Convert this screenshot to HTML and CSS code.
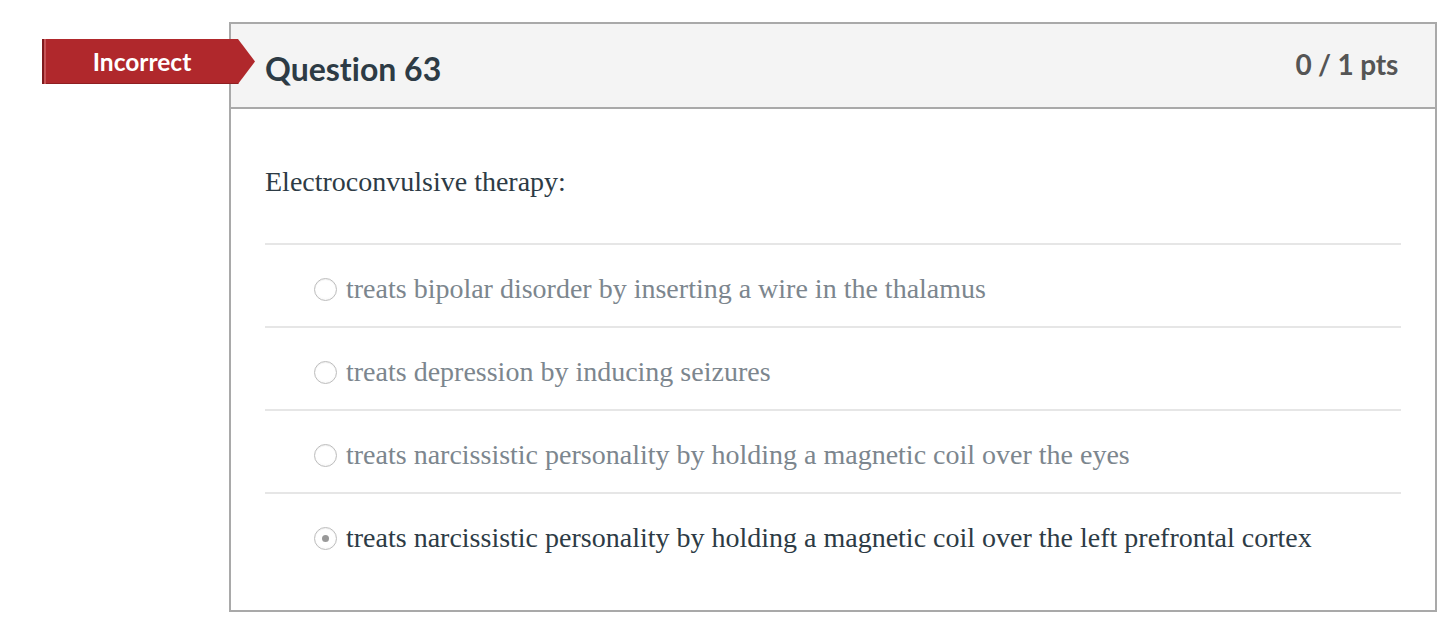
FILE: index.html
```html
<!DOCTYPE html>
<html>
<head>
<meta charset="utf-8">
<link rel="stylesheet" href="styles.css">
</head>
<body>
<div class="question">
  <div class="badge">Incorrect</div>
  <div class="q-header">
    <h2 class="q-title">Question 63</h2>
    <div class="q-points">0 / 1 pts</div>
  </div>
  <div class="q-body">
    <div class="q-text">Electroconvulsive therapy:</div>
    <div class="answers">
      <div class="answer"><span class="radio"></span><span class="label">treats bipolar disorder by inserting a wire in the thalamus</span></div>
      <div class="answer"><span class="radio"></span><span class="label">treats depression by inducing seizures</span></div>
      <div class="answer"><span class="radio"></span><span class="label">treats narcissistic personality by holding a magnetic coil over the eyes</span></div>
      <div class="answer selected"><span class="radio"></span><span class="label">treats narcissistic personality by holding a magnetic coil over the left prefrontal cortex</span></div>
    </div>
  </div>
</div>
</body>
</html>
```

FILE: styles.css
```css
html, body {
  margin: 0;
  padding: 0;
  background: #ffffff;
}
body {
  padding-top: 22px;
  padding-left: 229px;
}
.question {
  position: relative;
  box-sizing: border-box;
  width: 1208px;
  height: 590px;
  border: 2px solid #a9a9a9;
}
.badge {
  position: absolute;
  left: -189px;
  top: 15px;
  box-sizing: border-box;
  width: 213px;
  height: 45px;
  padding-right: 15px;
  background: #b0282c;
  border-left: 2px solid #7e1a1d;
  box-shadow: inset 2px 0 0 #c65457, inset 0 -1px 0 #8f1f22;
  clip-path: polygon(0 0, 196px 0, 213px 50%, 196px 100%, 0 100%);
  color: #ffffff;
  font-family: Lato, "Liberation Sans", sans-serif;
  font-weight: 700;
  font-size: 24.5px;
  font-variant-ligatures: none;
  display: flex;
  align-items: center;
  justify-content: center;
}
.q-header {
  box-sizing: border-box;
  height: 85px;
  background: #f4f4f4;
  border-bottom: 2px solid #a9a9a9;
  display: flex;
  justify-content: space-between;
  align-items: flex-start;
  padding: 26px 37px 0 34px;
  font-family: Lato, "Liberation Sans", sans-serif;
  font-weight: 700;
  font-variant-ligatures: none;
}
.q-title {
  margin: 3px 0 0 0;
  font-size: 32px;
  line-height: 1;
  font-weight: 700;
  color: #2d3b45;
}
.q-points {
  font-size: 28px;
  line-height: 1;
  color: #555555;
  letter-spacing: -0.2px;
}
.q-body {
  padding: 52px 34px 0 34px;
  font-family: "Liberation Serif", "Times New Roman", serif;
  font-size: 28px;
  line-height: 42px;
  color: #2d3b45;
}
.q-text {
  margin-bottom: 40px;
}
.answer {
  display: flex;
  align-items: center;
  border-top: 2px solid #e6e6e6;
  padding: 23px 0 16px 49px;
}
.radio {
  box-sizing: border-box;
  width: 23px;
  height: 23px;
  border-radius: 50%;
  border: 1.5px solid #bdbdbd;
  background: radial-gradient(circle at 50% 40%, #ffffff 60%, #eeeeee 100%);
  box-shadow: inset 0 1px 1px rgba(0, 0, 0, 0.06);
  margin-right: 9px;
  flex: none;
  display: flex;
  align-items: center;
  justify-content: center;
}
.label {
  color: #7c868e;
}
.selected .label {
  color: #2d3b45;
}
.selected .radio::after {
  content: "";
  width: 7px;
  height: 7px;
  border-radius: 50%;
  background: #999999;
}
```
